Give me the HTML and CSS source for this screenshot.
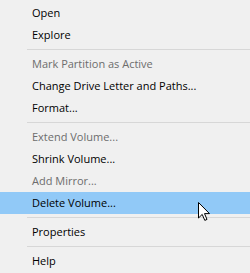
FILE: index.html
```html
<!DOCTYPE html>
<html lang="en">
<head>
    <meta charset="UTF-8">
    <meta name="viewport" content="width=device-width, initial-scale=1.0">
    <title>Volume menu</title>
    <link rel="stylesheet" href="styles.css">
</head>
<body>
    <ul class="menu">
        <li class="item">Open</li>
        <li class="item">Explore</li>
        <li class="sep"></li>
        <li class="item off">Mark Partition as Active</li>
        <li class="item">Change Drive Letter and Paths...</li>
        <li class="item">Format...</li>
        <li class="sep"></li>
        <li class="item off">Extend Volume...</li>
        <li class="item">Shrink Volume...</li>
        <li class="item off">Add Mirror...</li>
        <li class="item hover">Delete Volume...
            <svg class="cursor" width="13" height="20" viewBox="0 0 13 20">
                <path d="M0.5 0.5 L0.5 16 L4.2 12.4 L6.8 18.4 L9 17.4 L6.5 11.6 L11.5 11.6 Z" fill="white" stroke="black" stroke-width="1"/>
            </svg>
        </li>
        <li class="sep"></li>
        <li class="item">Properties</li>
        <li class="sep"></li>
        <li class="item">Help</li>
    </ul>
</body>
</html>
```

FILE: styles.css
```css
body {
    margin: 0;
    padding: 0;
    background-color: #f0f0f0;
    font-family: "Open Sans", "Noto Sans", sans-serif;
    font-size: 11px;
    overflow: hidden;
}
.menu {
    list-style: none;
    margin: 0;
    padding: 2px 0 0 0;
}
.item {
    position: relative;
    height: 22px;
    line-height: 22px;
    padding-left: 32px;
    color: #000;
    white-space: nowrap;
}
.item.off {
    color: #6d6d6d;
}
.item.hover {
    background-color: #91c9f7;
}
.sep {
    height: 4px;
    margin: 0 0 3px 27px;
    box-sizing: border-box;
    border-bottom: 1px solid #d7d7d7;
}
.cursor {
    position: absolute;
    left: 198px;
    top: 10px;
}
```
